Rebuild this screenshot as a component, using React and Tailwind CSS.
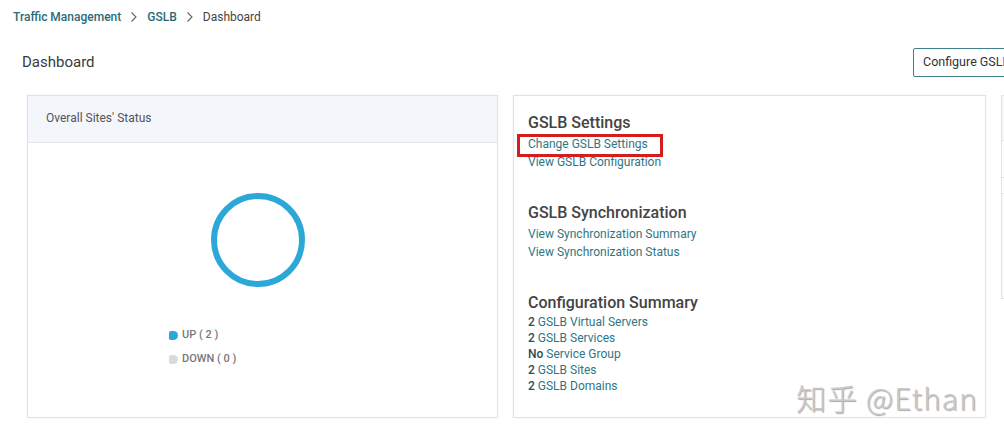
import React from "react";

const Link = ({ children }) => (
  <div className="text-[12px] leading-[18px] text-[#2f7684]">{children}</div>
);

const SummaryItem = ({ count, label }) => (
  <div className="text-[12px] leading-[16px] text-[#2f7684]">
    <span className="text-[#2d4a52] font-medium">{count}</span> {label}
  </div>
);

const Chevron = () => (
  <svg className="mx-[9px]" width="8" height="12" viewBox="0 0 8 12">
    <path d="M1.5 1.5 L6 6 L1.5 10.5" fill="none" stroke="#666" strokeWidth="1.1" />
  </svg>
);

const App = () => {
  return (
    <div className="relative w-[1004px] h-[440px] overflow-hidden bg-white font-['Roboto','Liberation_Sans',sans-serif]">
      {/* breadcrumb */}
      <div className="flex items-center pt-[9px] pl-[13px] text-[12px] leading-[16px]">
        <span className="font-medium text-[#2b6b78]">Traffic Management</span>
        <Chevron />
        <span className="font-medium text-[#2b6b78]">GSLB</span>
        <Chevron />
        <span className="text-[#444]">Dashboard</span>
      </div>

      {/* title row */}
      <div className="flex items-center mt-[23px] pl-[22px]">
        <h1 className="text-[15px] leading-[20px] mt-[-2px] text-[#3a3a3a]">Dashboard</h1>
        <button className="ml-auto mr-[-100px] w-[191px] h-[29px] shrink-0 border border-[#3d7f8c] rounded-[2px] pl-[9px] text-left text-[12.5px] text-[#333]">
          Configure GSLB Wizard
        </button>
      </div>

      {/* cards */}
      <div className="flex gap-[15px] pl-[27px] mt-[18px]">
        <div className="w-[471px] h-[323px] shrink-0 border border-[#e2e2e2] shadow-[0_0_2px_rgba(0,0,0,0.06)] flex flex-col">
          <div className="h-[47px] bg-[#f3f6fa] border-b border-[#e2e6ea] flex items-center pl-[18px]">
            <span className="text-[12px] text-[#555] mt-[-2px]">Overall Sites' Status</span>
          </div>
          <div className="flex flex-col">
            <svg className="ml-[182px] mt-[49px]" width="96" height="96" viewBox="0 0 96 96">
              <circle cx="48" cy="48" r="44" fill="none" stroke="#2ba7d8" strokeWidth="6" />
            </svg>
            <div className="ml-[141px] mt-[39px] flex flex-col gap-[8px]">
              <div className="flex items-center gap-[4px] h-[16px]">
                <span className="w-[9px] h-[9px] rounded-l-[2px] rounded-r-[5px] bg-[#2ba7d8]" />
                <span className="text-[11px] font-medium text-[#777]">UP ( 2 )</span>
              </div>
              <div className="flex items-center gap-[4px] h-[16px]">
                <span className="w-[9px] h-[9px] rounded-l-[2px] rounded-r-[5px] bg-[#dadada]" />
                <span className="text-[11px] font-medium text-[#777]">DOWN ( 0 )</span>
              </div>
            </div>
          </div>
        </div>

        <div className="w-[473px] h-[323px] shrink-0 border border-[#e2e2e2] shadow-[0_0_2px_rgba(0,0,0,0.06)] pl-[14px] pt-[17px]">
          <h2 className="text-[16px] leading-[20px] font-medium text-[#444]">GSLB Settings</h2>
          <div className="mt-[2px] relative">
            <span className="absolute left-[-11px] top-[-1px] w-[146px] h-[23px] border-[3px] border-[#d21f1d]" />
            <Link>Change GSLB Settings</Link>
          </div>
          <Link>View GSLB Configuration</Link>

          <h2 className="mt-[32px] text-[16px] leading-[20px] font-medium text-[#444]">GSLB Synchronization</h2>
          <div className="mt-[2px]">
            <Link>View Synchronization Summary</Link>
            <Link>View Synchronization Status</Link>
          </div>

          <h2 className="mt-[32px] text-[16px] leading-[20px] font-medium text-[#444]">Configuration Summary</h2>
          <div className="mt-[1px]">
            <SummaryItem count="2" label="GSLB Virtual Servers" />
            <SummaryItem count="2" label="GSLB Services" />
            <SummaryItem count="No" label="Service Group" />
            <SummaryItem count="2" label="GSLB Sites" />
            <SummaryItem count="2" label="GSLB Domains" />
          </div>
        </div>

        <div className="w-[120px] h-[204px] shrink-0 border border-[#e2e2e2] flex flex-col">
          <div className="h-[45px] bg-[#f6f6f6] border-b border-[#e6e6e6]" />
          <div className="h-[37px] border-b border-[#e6e6e6]" />
          <div className="h-[16px] border-b border-[#e6e6e6]" />
          <div className="flex-1 bg-[#fafafa]" />
        </div>
      </div>

      {/* watermark */}
      <div className="absolute left-[796px] top-[379px] text-[30px] leading-[36px] font-light tracking-[1px] text-[#c9c9c9] font-['Noto_Sans_CJK_SC',sans-serif] [text-shadow:1px_1px_1px_rgba(0,0,0,0.35)] whitespace-nowrap">
        知乎 @Ethan
      </div>
    </div>
  );
};

export default App;
